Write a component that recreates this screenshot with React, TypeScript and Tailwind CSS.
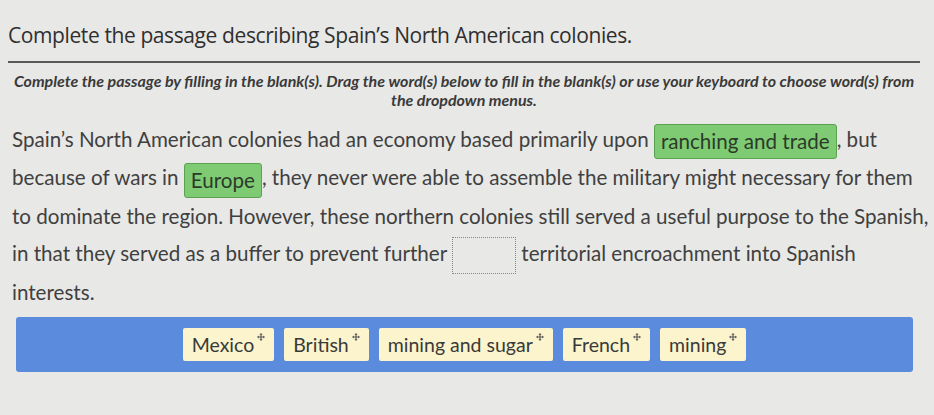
import React from 'react'

const words = ['Mexico', 'British', 'mining and sugar', 'French', 'mining']

function MoveIcon() {
  return (
    <svg className="ml-[3px] -mt-[14px] h-[8px] w-[8px] text-[#555]" viewBox="0 0 10 10" fill="currentColor">
      <path d="M5 0 L7 2.2 H5.7 V4.3 H7.8 V3 L10 5 L7.8 7 V5.7 H5.7 V7.8 H7 L5 10 L3 7.8 H4.3 V5.7 H2.2 V7 L0 5 L2.2 3 V4.3 H4.3 V2.2 H3 Z" />
    </svg>
  )
}

function Filled({ children }: { children: React.ReactNode }) {
  return (
    <span className="inline-block h-[35px] rounded-[3px] border border-[#5aa24f] bg-[#7fcb74] px-[6px] align-middle leading-[33px] text-[#2c3a2a]">
      {children}
    </span>
  )
}

export default function App() {
  return (
    <div className="min-h-screen w-[934px] h-[415px] overflow-hidden bg-[#e8e8e6] pl-[8px] pr-[14px] text-[#333]" style={{ fontFamily: 'Lato, "Open Sans", sans-serif' }}>
      <h1 className="pt-[21px] text-[21px] font-medium leading-[28px] text-[#2f2f2f]" style={{ fontFamily: '"Open Sans", Lato, sans-serif', letterSpacing: '-0.4px' }}>
        Complete the passage describing Spain’s North American colonies.
      </h1>
      <div className="mt-[12px] h-[2px] bg-[#5a5a5a]" />
      <p className="mt-[8px] text-center text-[16px] font-bold italic leading-[19px] text-[#3a3a3a]">
        Complete the passage by filling in the blank(s). Drag the word(s) below to fill in the blank(s) or use your keyboard to choose word(s) from the dropdown menus.
      </p>
      <p className="mt-[12px] -mr-[10px] pl-[4px] text-[20.6px] leading-[37px] text-[#404040]">
        Spain’s North American colonies had an economy based primarily upon <Filled>ranching and trade</Filled>, but because of wars in <Filled>Europe</Filled>, they never were able to assemble the military might necessary for them to dominate the region. However, these northern colonies still served a useful purpose to the Spanish, in that they served as a buffer to prevent further{' '}
        <span className="inline-block h-[37px] w-[64px] border border-dotted border-[#888] align-middle" /> territorial encroachment into Spanish interests.
      </p>
      <div className="mt-[6px] ml-[8px] mr-[7px] flex h-[55px] items-center justify-center gap-[10px] rounded-[3px] bg-[#5b8bdc]">
        {words.map((w) => (
          <div key={w} className="flex h-[33px] items-center rounded-[2px] bg-[#fbf4cc] px-[9px] text-[19.5px] text-[#3a3a3a]">
            {w}
            <MoveIcon />
          </div>
        ))}
      </div>
    </div>
  )
}
